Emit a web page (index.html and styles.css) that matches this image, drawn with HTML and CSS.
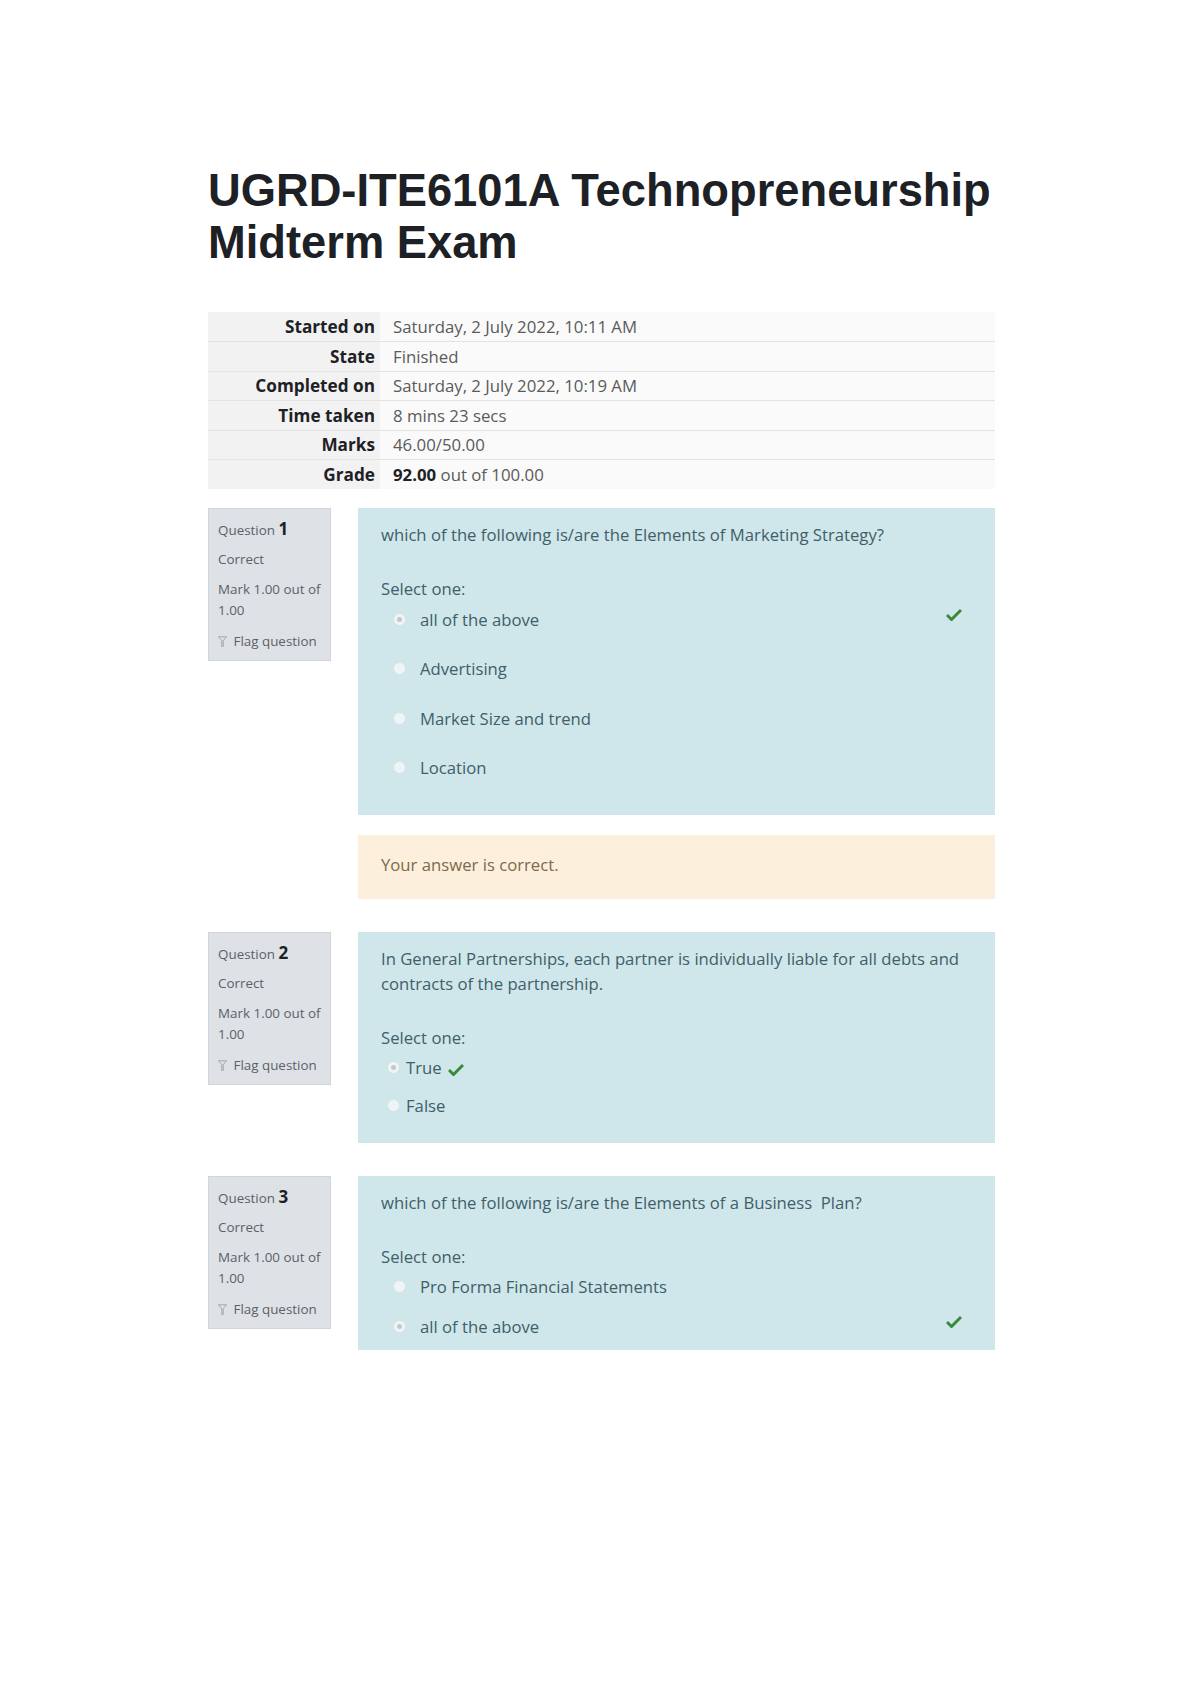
FILE: index.html
```html
<!DOCTYPE html>
<html>
<head>
<meta charset="utf-8">
<link rel="stylesheet" href="styles.css">
</head>
<body>
<div class="page">
  <h1 class="title">UGRD-ITE6101A Technopreneurship Midterm Exam</h1>

  <table class="summary">
    <tr><th>Started on</th><td>Saturday, 2 July 2022, 10:11 AM</td></tr>
    <tr><th>State</th><td>Finished</td></tr>
    <tr><th>Completed on</th><td>Saturday, 2 July 2022, 10:19 AM</td></tr>
    <tr><th>Time taken</th><td>8 mins 23 secs</td></tr>
    <tr><th>Marks</th><td>46.00/50.00</td></tr>
    <tr><th>Grade</th><td><b>92.00</b> out of 100.00</td></tr>
  </table>

  <div class="que">
    <div class="info">
      <div class="qno">Question <span class="num">1</span></div>
      <div class="state">Correct</div>
      <div class="grade">Mark 1.00 out of 1.00</div>
      <div class="flag"><svg class="flagicon" viewBox="0 0 10 12" width="9" height="11"><path d="M0.5 0.8 L9.5 0.8 L5.8 5 L5.8 11.5 L4.2 11.5 L4.2 5 Z" fill="none" stroke="#9aa0a6" stroke-width="1"/></svg> Flag question</div>
    </div>
    <div class="content">
      <div class="formulation">
        <div class="qtext">which of the following is/are the Elements of Marketing Strategy?</div>
        <div class="prompt">Select one:</div>
        <div class="answers mc">
          <div class="opt"><span class="radio checked"></span><span class="label">all of the above</span><svg class="tick right" viewBox="0 0 16 13" width="16" height="13"><path d="M1 7 L5.5 11.5 L15 2" fill="none" stroke="#3a8a3e" stroke-width="3"/></svg></div>
          <div class="opt"><span class="radio"></span><span class="label">Advertising</span></div>
          <div class="opt"><span class="radio"></span><span class="label">Market Size and trend</span></div>
          <div class="opt"><span class="radio"></span><span class="label">Location</span></div>
        </div>
      </div>
      <div class="outcome">Your answer is correct.</div>
    </div>
  </div>

  <div class="que">
    <div class="info">
      <div class="qno">Question <span class="num">2</span></div>
      <div class="state">Correct</div>
      <div class="grade">Mark 1.00 out of 1.00</div>
      <div class="flag"><svg class="flagicon" viewBox="0 0 10 12" width="9" height="11"><path d="M0.5 0.8 L9.5 0.8 L5.8 5 L5.8 11.5 L4.2 11.5 L4.2 5 Z" fill="none" stroke="#9aa0a6" stroke-width="1"/></svg> Flag question</div>
    </div>
    <div class="content">
      <div class="formulation">
        <div class="qtext">In General Partnerships, each partner is individually liable for all debts and contracts of the partnership.</div>
        <div class="prompt">Select one:</div>
        <div class="answers tf">
          <div class="opt"><span class="radio checked"></span><span class="label">True</span><svg class="tick" viewBox="0 0 16 13" width="16" height="13"><path d="M1 7 L5.5 11.5 L15 2" fill="none" stroke="#3a8a3e" stroke-width="3"/></svg></div>
          <div class="opt"><span class="radio"></span><span class="label">False</span></div>
        </div>
      </div>
    </div>
  </div>

  <div class="que">
    <div class="info">
      <div class="qno">Question <span class="num">3</span></div>
      <div class="state">Correct</div>
      <div class="grade">Mark 1.00 out of 1.00</div>
      <div class="flag"><svg class="flagicon" viewBox="0 0 10 12" width="9" height="11"><path d="M0.5 0.8 L9.5 0.8 L5.8 5 L5.8 11.5 L4.2 11.5 L4.2 5 Z" fill="none" stroke="#9aa0a6" stroke-width="1"/></svg> Flag question</div>
    </div>
    <div class="content">
      <div class="formulation">
        <div class="qtext">which of the following is/are the Elements of a Business&nbsp; Plan?</div>
        <div class="prompt">Select one:</div>
        <div class="answers mc3">
          <div class="opt"><span class="radio"></span><span class="label">Pro Forma Financial Statements</span></div>
          <div class="opt"><span class="radio checked"></span><span class="label">all of the above</span><svg class="tick right" viewBox="0 0 16 13" width="16" height="13"><path d="M1 7 L5.5 11.5 L15 2" fill="none" stroke="#3a8a3e" stroke-width="3"/></svg></div>
        </div>
      </div>
    </div>
  </div>
</div>
</body>
</html>
```

FILE: styles.css
```css
html, body {
  margin: 0;
  padding: 0;
  background: #ffffff;
}

body {
  font-family: "Open Sans", "Noto Sans", sans-serif;
  color: #3f5f68;
}

.page {
  width: 787px;
  margin-left: 208px;
  padding-top: 165px;
}

.title {
  margin: 0;
  font-family: "Liberation Sans", Arial, sans-serif;
  font-weight: bold;
  font-size: 45.3px;
  line-height: 52px;
  color: #1d2125;
}

.summary {
  margin-top: 43px;
  width: 100%;
  border-collapse: collapse;
  font-size: 16.8px;
}

.summary tr {
  height: 29.5px;
}

.summary tr + tr th,
.summary tr + tr td {
  border-top: 1px solid #e3e3e3;
}

.summary th {
  width: 167px;
  text-align: right;
  padding: 0 5px 0 0;
  background: #f2f2f2;
  color: #1d2125;
  font-weight: 700;
  font-size: 17.2px;
  white-space: nowrap;
}

.summary td {
  padding: 0 13px;
  background: #fafafa;
  color: #5a5a5a;
}

.summary td b {
  color: #1d2125;
}

.que {
  display: flex;
  align-items: flex-start;
  gap: 27px;
  margin-top: 19px;
  margin-bottom: 33px;
}

.que + .que {
  margin-top: 0;
}

.info {
  width: 103px;
  flex: none;
  background: #dee2e6;
  border: 1px solid #d0d5da;
  padding: 9px;
  font-size: 13.4px;
  line-height: 20px;
  color: #5b6166;
}

.info .qno {
  line-height: 22px;
  margin-bottom: 8px;
}

.info .num {
  font-weight: 700;
  font-size: 17px;
  color: #1d2125;
}

.info .state {
  margin-bottom: 10px;
}

.info .grade {
  line-height: 21px;
  margin-bottom: 10px;
}

.flagicon {
  vertical-align: -1px;
  margin-right: 3px;
}

.content {
  flex: 1;
  display: flex;
  flex-direction: column;
  gap: 20px;
}

.formulation {
  background: #cfe6eb;
  padding: 14px 23px 11px 23px;
  font-size: 16.7px;
  line-height: 25px;
}

.qtext {
  margin-bottom: 29px;
}

.prompt {
  margin-bottom: 5.5px;
}

.answers {
  display: flex;
  flex-direction: column;
}

.answers .opt {
  display: flex;
  align-items: center;
  height: 25px;
  padding-left: 12px;
}

.answers.mc {
  gap: 24.5px;
  padding-bottom: 24px;
}

.answers.mc3 {
  gap: 15px;
}

.answers.tf {
  gap: 13px;
  padding-bottom: 13.5px;
}

.answers.tf .opt {
  padding-left: 6px;
}

.radio {
  width: 11px;
  height: 11px;
  border-radius: 50%;
  background: #eef5f6;
  border: 1px solid #d8e3e5;
  flex: none;
  margin-right: 14px;
  position: relative;
}

.answers.tf .radio {
  margin-right: 6px;
}

.radio.checked::after {
  content: "";
  position: absolute;
  left: 3px;
  top: 3px;
  width: 5px;
  height: 5px;
  border-radius: 50%;
  background: #c3c9cb;
}

.label {
  color: #3f5f68;
}

.tick {
  margin-left: 6px;
  margin-top: 3px;
}

.tick.right {
  margin-left: auto;
  margin-right: 10px;
  margin-top: -10px;
}

.outcome {
  background: #fcefdc;
  color: #7d6a4a;
  font-size: 16.7px;
  padding: 16.5px 23px 22px 23px;
  line-height: 25px;
}
```
